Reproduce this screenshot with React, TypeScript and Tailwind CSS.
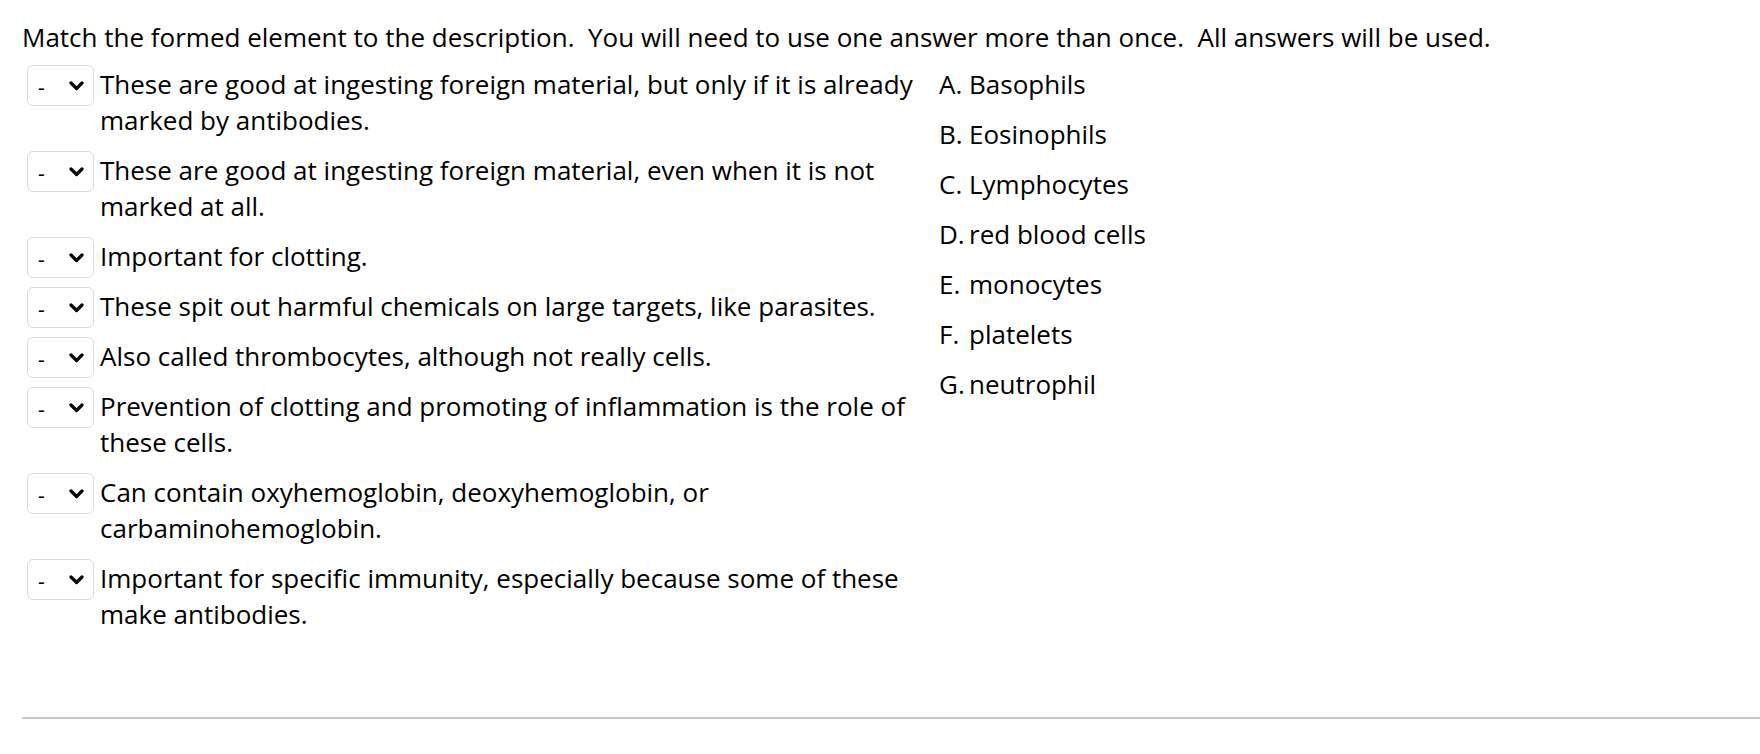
import React from 'react';

const QUESTIONS: string[] = [
    'These are good at ingesting foreign material, but only if it is already marked by antibodies.',
    'These are good at ingesting foreign material, even when it is not marked at all.',
    'Important for clotting.',
    'These spit out harmful chemicals on large targets, like parasites.',
    'Also called thrombocytes, although not really cells.',
    'Prevention of clotting and promoting of inflammation is the role of these cells.',
    'Can contain oxyhemoglobin, deoxyhemoglobin, or carbaminohemoglobin.',
    'Important for specific immunity, especially because some of these make antibodies.',
];

const ANSWERS: Array<[string, string]> = [
    ['A.', 'Basophils'],
    ['B.', 'Eosinophils'],
    ['C.', 'Lymphocytes'],
    ['D.', 'red blood cells'],
    ['E.', 'monocytes'],
    ['F.', 'platelets'],
    ['G.', 'neutrophil'],
];

const ChevronDown = () => (
    <svg width="15" height="10" viewBox="0 0 15 10" aria-hidden="true">
        <path d="M2 2 L7.5 7.5 L13 2" fill="none" stroke="#000" strokeWidth="3.2" strokeLinecap="round" strokeLinejoin="round" />
    </svg>
);

const AnswerSelect = () => (
    <div className="ml-[5px] -mb-[4px] flex h-[41px] w-[67px] shrink-0 items-center rounded-[6px] border border-[#dcdcdc] bg-white pl-[10px] pr-[9px]">
        <span className="mt-[4px] text-[21px] leading-none">-</span>
        <span className="ml-auto flex items-center">
            <ChevronDown />
        </span>
    </div>
);

export default function App() {
    return (
        <div className="min-h-[754px] bg-white pl-[22px] pt-[19px] text-black [font-family:'Open_Sans',sans-serif] text-[26px] leading-[36px]">
            <p className="mb-[10px]">
                Match the formed element to the description.{'\u00a0'} You will need to use one answer more than once.{'\u00a0'} All answers will be used.
            </p>

            <div className="flex items-start">
                <div className="flex w-[898px] flex-col gap-[13px]">
                    {QUESTIONS.map((text, i) => (
                        <div key={i} className="flex items-start">
                            <AnswerSelect />
                            <div className="ml-[6px] w-[822px] pt-px">{text}</div>
                        </div>
                    ))}
                </div>

                <ul className="ml-[19px] mt-px flex flex-col gap-[14px]">
                    {ANSWERS.map(([label, text]) => (
                        <li key={label} className="flex">
                            <span className="w-[30px] shrink-0">{label}</span>
                            <span>{text}</span>
                        </li>
                    ))}
                </ul>
            </div>

            <div className="mt-[85px] h-[2px] bg-[#c8c8c8]" />
        </div>
    );
}
